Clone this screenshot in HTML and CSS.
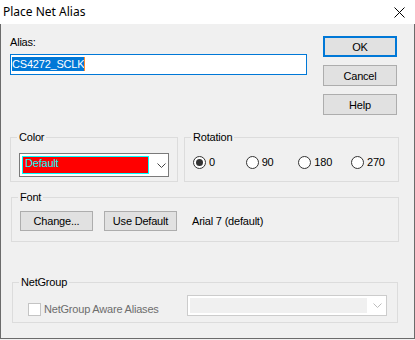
FILE: index.html
```html
<!DOCTYPE html>
<html lang="en">
<head>
    <meta charset="UTF-8">
    <title>Place Net Alias</title>
    <link rel="stylesheet" href="styles.css">
</head>
<body>

    <div class="window">

        <div class="titlebar">
            <span class="title">Place Net Alias</span>
            <svg class="close" width="11" height="11" viewBox="0 0 11 11">
                <path d="M0.5 0.5 L10.5 10.5 M10.5 0.5 L0.5 10.5" stroke="#000" stroke-width="1" fill="none"/>
            </svg>
        </div>

        <div class="client">

            <div class="top">
                <div class="alias">
                    <label class="lbl">Alias:</label>
                    <div class="textbox"><span class="sel">CS4272_SCLK</span><span class="caret"></span></div>
                </div>
                <div class="buttons">
                    <button class="btn default">OK</button>
                    <button class="btn">Cancel</button>
                    <button class="btn">Help</button>
                </div>
            </div>

            <div class="pair">
                <fieldset class="group color">
                    <legend>Color</legend>
                    <div class="combo">
                        <span class="swatch">Default</span>
                        <svg class="chev" width="9" height="5" viewBox="0 0 9 5">
                            <path d="M0.5 0.5 L4.5 4.5 L8.5 0.5" stroke="#444" stroke-width="1" fill="none"/>
                        </svg>
                    </div>
                </fieldset>

                <fieldset class="group rotation">
                    <legend>Rotation</legend>
                    <div class="radios">
                        <div class="opt"><span class="radio on"></span>0</div>
                        <div class="opt"><span class="radio"></span>90</div>
                        <div class="opt"><span class="radio"></span>180</div>
                        <div class="opt"><span class="radio"></span>270</div>
                    </div>
                </fieldset>
            </div>

            <fieldset class="group font">
                <legend>Font</legend>
                <div class="fontrow">
                    <button class="btn small">Change...</button>
                    <button class="btn small">Use Default</button>
                    <span class="fontname">Arial 7 (default)</span>
                </div>
            </fieldset>

            <fieldset class="group netgroup">
                <legend>NetGroup</legend>
                <div class="netrow">
                    <div class="check"><span class="box"></span>NetGroup Aware Aliases</div>
                    <div class="combo off">
                        <span class="field"></span>
                        <svg class="chev" width="9" height="5" viewBox="0 0 9 5">
                            <path d="M0.5 0.5 L4.5 4.5 L8.5 0.5" stroke="#bcbcbc" stroke-width="1" fill="none"/>
                        </svg>
                    </div>
                </div>
            </fieldset>

        </div>
    </div>

</body>
</html>
```

FILE: styles.css
```css
* {
    box-sizing: border-box;
}
html {
    background: #f0f0f0;
}
body {
    margin: 0;
    font-family: "Liberation Sans", Arial, sans-serif;
    font-size: 11px;
    color: #000;
}
.window {
    width: 415px;
    height: 339px;
    display: flex;
    flex-direction: column;
}
.titlebar {
    height: 24px;
    flex: none;
    background: #fff;
    display: flex;
    align-items: flex-start;
    padding: 0 10px 0 3px;
}
.title {
    font-family: "Noto Sans", sans-serif;
    font-size: 12px;
    line-height: 24px;
}
.close {
    margin-left: auto;
    margin-top: 7px;
}
.client {
    flex: 1;
    background: #f0f0f0;
    border: 1px solid #6b6b6b;
    border-top: 0;
    padding: 12px 15px 0 9px;
    letter-spacing: -0.2px;
}

/* alias + knapper */
.top {
    display: flex;
}
.alias {
    width: 297px;
    margin-right: 16px;
}
.lbl {
    display: block;
    line-height: 13px;
    margin-bottom: 5px;
}
.textbox {
    height: 21px;
    border: 1px solid #0078d7;
    background: #fff;
    padding: 2px 1px;
    display: flex;
}
.sel {
    background: #0078d7;
    color: #fff;
    line-height: 14px;
    height: 14px;
}
.caret {
    width: 1px;
    height: 14px;
    background: #ff8728;
}
.buttons {
    display: flex;
    flex-direction: column;
    gap: 8px;
    margin-right: 1px;
}
.btn {
    font: inherit;
    letter-spacing: inherit;
    color: #000;
    width: 74px;
    height: 21px;
    padding: 0;
    background: #e1e1e1;
    border: 1px solid #adadad;
}
.btn.default {
    border: 2px solid #0078d7;
}
.btn.small {
    width: 73px;
    height: 20px;
}

/* grupper */
.group {
    margin: 0;
    min-width: 0;
    border: 1px solid #dcdcdc;
    padding: 0 8px;
}
.group legend {
    line-height: 13px;
    padding: 0 2px;
    margin-left: -2px;
}
.pair {
    display: flex;
    gap: 6px;
    margin-top: 16px;
}
.color {
    width: 168px;
    padding-top: 9px;
    padding-bottom: 4px;
}
.rotation {
    flex: 1;
    padding-top: 12px;
}
.combo {
    height: 24px;
    width: 150px;
    border: 1px solid #7a7a7a;
    background: #fff;
    padding: 2px;
    display: flex;
    align-items: center;
}
.swatch {
    width: 127px;
    height: 18px;
    border: 1px solid #00ffff;
    background: #ff0000;
    color: #00ffff;
    line-height: 13px;
    padding-left: 2px;
}
.chev {
    margin-left: 8px;
}
.radios {
    display: grid;
    grid-template-columns: repeat(4, 52.67px);
}
.opt {
    display: flex;
    align-items: center;
    line-height: 13px;
}
.radio {
    width: 13px;
    height: 13px;
    border: 1px solid #333;
    border-radius: 50%;
    background: #fff;
    margin-right: 3px;
    display: flex;
    align-items: center;
    justify-content: center;
}
.radio.on::after {
    content: "";
    width: 7px;
    height: 7px;
    border-radius: 50%;
    background: #333;
}
.font {
    margin: 9px 0 0 1px;
    padding-top: 7px;
    padding-bottom: 10px;
}
.fontrow {
    display: flex;
    align-items: center;
}
.fontrow .btn + .btn {
    margin-left: 11px;
}
.fontname {
    margin-left: 15px;
}
.netgroup {
    margin: 34px 1px 0 2px;
    padding: 6px 10px 6px 8px;
}
.netrow {
    display: flex;
    align-items: flex-start;
}
.check {
    display: flex;
    align-items: center;
    line-height: 13px;
    margin: 8px 0 0 7px;
    color: #6d6d6d;
}
.box {
    width: 13px;
    height: 13px;
    border: 1px solid #c4c4c4;
    background: #fff;
    margin-right: 3px;
}
.combo.off {
    width: 200px;
    height: 21px;
    margin-left: auto;
    border-color: #cccccc;
}
.field {
    width: 177px;
    height: 15px;
    background: #f0f0f0;
}
.combo.off .chev {
    margin-left: 6px;
}
```
